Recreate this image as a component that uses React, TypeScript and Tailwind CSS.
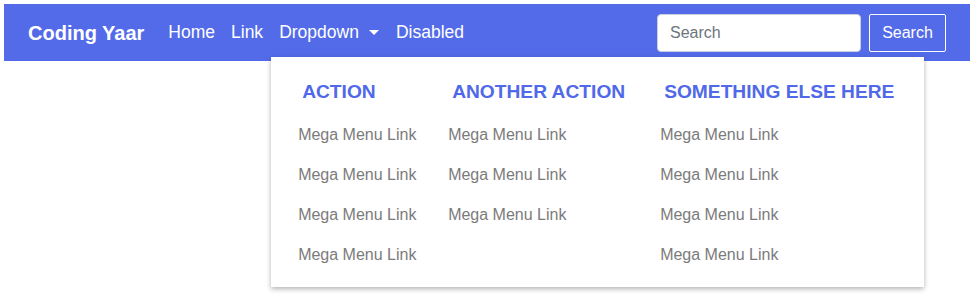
const columns = [
  { title: "Action", width: "w-[150px]", links: 4 },
  { title: "Another Action", width: "w-[212px]", links: 3 },
  { title: "Something Else Here", width: "w-[240px]", links: 4 },
];

function MegaMenu() {
  return (
    <div className="absolute left-[-8px] top-[38px] z-10 flex w-[653px] bg-white pb-[12px] pl-[27px] pt-[23px] shadow-[0_2px_5px_rgba(0,0,0,0.3)]">
      {columns.map((col) => (
        <div key={col.title} className={col.width}>
          <div className="ml-1 text-[19.2px] font-bold uppercase leading-6 text-[#5069e8]">
            {col.title}
          </div>
          <ul className="mt-[11px]">
            {Array.from({ length: col.links }).map((_, i) => (
              <li key={i} className="text-[16px] leading-10 text-[#7b7b7b]">
                Mega Menu Link
              </li>
            ))}
          </ul>
        </div>
      ))}
    </div>
  );
}

export default function App() {
  return (
    <div className="min-h-[307px] bg-white px-1 pt-1 font-['Liberation_Sans',Arial,sans-serif]">
      <nav className="flex h-[57px] items-center bg-[#536be9] pl-6 pr-6 text-white">
        <span className="text-[20px] font-bold">Coding Yaar</span>
        <ul className="ml-6 flex items-center gap-[16px] text-[17.5px]">
          <li>Home</li>
          <li>Link</li>
          <li className="relative flex items-center">
            Dropdown
            <span className="ml-[10px] mb-[1px] h-0 w-0 border-x-[5px] border-t-[5px] border-x-transparent border-t-white" />
            <MegaMenu />
          </li>
          <li className="ml-[1px]">Disabled</li>
        </ul>
        <form className="ml-auto flex items-center gap-2">
          <input
            placeholder="Search"
            className="h-[38px] w-[204px] rounded border border-[#c9cfe0] bg-white px-[12px] text-[16px] text-gray-700 placeholder:text-[#6c757d] focus:outline-none"
          />
          <button
            type="button"
            className="h-[38px] w-[77px] rounded-[2px] border border-white text-[16px] text-white"
          >
            Search
          </button>
        </form>
      </nav>
    </div>
  );
}
